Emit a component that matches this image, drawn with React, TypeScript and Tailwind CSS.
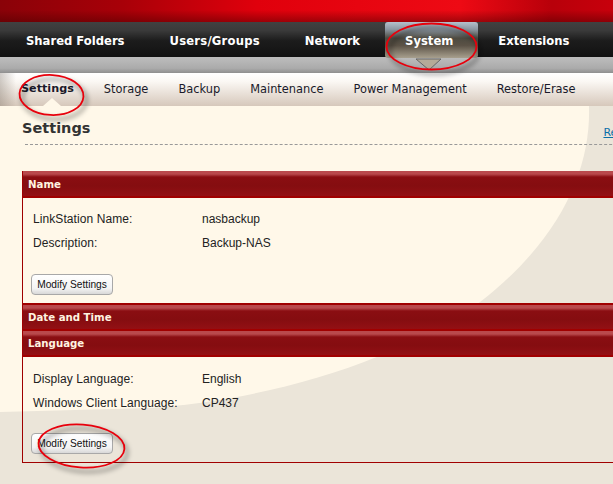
const nav = ["Shared Folders", "Users/Groups", "Network", "System", "Extensions"];
const sub = ["Settings", "Storage", "Backup", "Maintenance", "Power Management", "Restore/Erase"];
const verdana = "font-['DejaVu_Sans',sans-serif]";

function Header({ title, className }: { title: string; className: string }) {
  return (
    <div className={`${className} flex items-center pl-[5px] pt-[2px] text-[10.2px] font-bold text-[#fff3e0] bg-[linear-gradient(#b9494c_0,#b9494c_3px,#8a0e12_6px,#850d10_60%,#931014_100%)] border-b-2 border-b-[#a00000] ${verdana}`}>
      {title}
    </div>
  );
}

function Row({ label, value }: { label: string; value: string }) {
  return (
    <div className="flex h-[24px] items-center text-[12px] text-[#222] font-['Liberation_Sans',sans-serif]">
      <span className="w-[169px] tracking-[0.08px]">{label}</span>
      <span>{value}</span>
    </div>
  );
}

function Btn() {
  return (
    <button className="-ml-[2px] block w-[82px] h-[21px] rounded-[4px] border border-[#a8a8a8] bg-[linear-gradient(#ffffff,#f4f4f4_70%,#d8d8d8)] text-[10.2px] text-[#111] font-['Liberation_Sans',sans-serif]">
      Modify Settings
    </button>
  );
}

export default function App() {
  return (
    <div className="relative w-[613px] h-[484px] overflow-hidden bg-[#ebe5d9]">
      <div className="relative h-[22px] overflow-hidden bg-[linear-gradient(180deg,transparent_45%,rgba(70,0,0,0.45)),linear-gradient(90deg,#8a0208,#a80008_20%,#e0000c_42%,#ee0a14_75%,#b8000a_90%,#c8000c)]">
        <span className="absolute left-[260px] -top-[21px] text-[24px] leading-[24px] font-bold italic tracking-[1.5px] text-[#8a0d18] whitespace-nowrap font-['Liberation_Sans',sans-serif]">BUFFALO</span>
      </div>
      <div className="h-[35px] border-b border-[#111] bg-[linear-gradient(#414141,#3a3a3a_25%,#1c1c1c_55%,#121212)] flex items-center pl-[26px] pt-[5px] gap-[45px]">
        {nav.map((n) => (
          <span key={n} className={`relative text-[11.6px] font-bold text-white whitespace-nowrap ${n === "Users/Groups" ? "tracking-[0.22px]" : ""} ${verdana}`}>
            {n === "System" && (
              <span className="absolute -left-[20px] -right-[25px] -top-[11px] h-[36px] rounded-[3px] bg-[linear-gradient(#b4c0cc,#8d98a3_20%,#4d4a40_45%,#5b5246_65%,#a8a08e)]" />
            )}
            <span className="relative">{n}</span>
          </span>
        ))}
      </div>
      <div className="h-[16px] bg-[linear-gradient(#bdbdbd,#ababab_70%,#8f8f8f)]" />
      <div className="h-[33px] bg-[linear-gradient(90deg,rgba(120,110,100,0.35),transparent_16px),linear-gradient(#ffffff,#fbf8f4_25%,#d6c8bb)] flex items-center pl-[21px] gap-[30px]">
        {sub.map((s, i) => (
          <span key={s} className={`whitespace-nowrap text-[#1a1a2a] ${i === 0 ? "font-bold text-[11.2px]" : "text-[11.4px]"} ${verdana}`}>{s}</span>
        ))}
      </div>

      <div className="relative">
        <svg className="absolute left-0 top-0" width="613" height="378" viewBox="0 106 613 378">
          <path d="M0 106H589C591 170 560 240 480 302C400 360 270 400 150 408L0 412Z" fill="#fff8e9" />
        </svg>
        <div className="relative pl-[22px]">
          <div className="w-[680px]">
            <div className="h-[39px] pt-[11px] border-b border-dashed border-[#999] ml-[3px] -mb-px flex justify-between">
              <span className={`-ml-[3px] text-[14.5px] leading-[22px] font-bold text-[#333] ${verdana}`}>Settings</span>
              <span className={`mr-[57px] mt-[5px] text-[11px] leading-[22px] text-[#0b6fa8] underline ${verdana}`}>Refresh</span>
            </div>
            <div className="mt-[27px] border-l border-b border-[#a00000]">
              <Header title="Name" className="h-[27px]" />
              <div className="h-[105px] pl-[10px] pt-[9px]">
                <Row label="LinkStation Name:" value="nasbackup" />
                <Row label="Description:" value="Backup-NAS" />
                <div className="mt-[19px]"><Btn /></div>
              </div>
              <Header title="Date and Time" className="h-[28px] border-t-2 border-t-[#a00000]" />
              <Header title="Language" className="h-[26px]" />
              <div className="h-[105px] pl-[10px] pt-[10px]">
                <Row label="Display Language:" value="English" />
                <Row label="Windows Client Language:" value="CP437" />
                <div className="mt-[18px]"><Btn /></div>
              </div>
            </div>
          </div>
        </div>
      </div>

      <svg className="absolute left-0 top-0 pointer-events-none" width="613" height="484" viewBox="0 0 613 484">
        <path d="M416 59L429 70L441 59Z" fill="#b5ab98" stroke="#666" strokeWidth="1" />
        <path d="M43 106L52 98L61 106Z" fill="#fff8e9" />
        <defs>
          <filter id="s" x="-20%" y="-20%" width="140%" height="150%">
            <feGaussianBlur stdDeviation="2.5" />
          </filter>
        </defs>
        {[
          { cx: 431.5, cy: 46.5, rx: 45, ry: 23, r: 0 },
          { cx: 51.5, cy: 95, rx: 32, ry: 20, r: 3 },
          { cx: 81.5, cy: 446, rx: 43, ry: 21.5, r: 4 },
        ].map((e, i) => (
          <g key={i} transform={`rotate(${e.r} ${e.cx} ${e.cy})`}>
            <ellipse cx={e.cx + 3} cy={e.cy + 4} rx={e.rx} ry={e.ry} fill="none" stroke="#000" strokeOpacity="0.45" strokeWidth="2.5" filter="url(#s)" />
            <ellipse cx={e.cx} cy={e.cy} rx={e.rx} ry={e.ry} fill="none" stroke="#e8000c" strokeWidth="1.8" />
          </g>
        ))}
      </svg>
    </div>
  );
}
